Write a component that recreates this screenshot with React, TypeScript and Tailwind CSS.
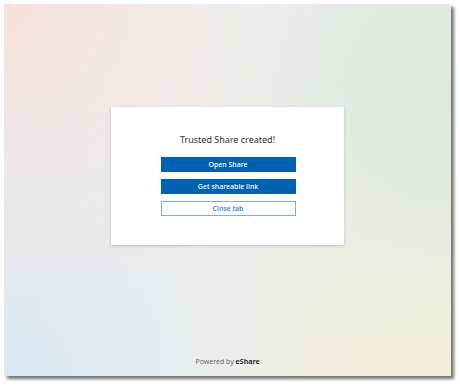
import React from 'react';

const buttonBase =
  'h-[15px] w-[135px] flex items-center justify-center text-[7px] font-medium leading-none';

export default function App() {
  return (
    <div className="w-[460px] h-[386px] bg-white pt-[4px] pl-[4px] font-['Noto_Sans',sans-serif]">
      <div
        className="w-[447px] h-[372px] flex flex-col shadow-[3px_3px_3px_rgba(0,0,0,0.55)]"
        style={{
          background:
            'radial-gradient(circle at 0% 0%, #f5e2df 0%, rgba(245,226,223,0) 55%),' +
            'radial-gradient(circle at 100% 25%, #dceadd 0%, rgba(220,234,221,0) 55%),' +
            'radial-gradient(circle at 0% 100%, #dbe9f4 0%, rgba(219,233,244,0) 55%),' +
            'radial-gradient(circle at 100% 100%, #f7efd8 0%, rgba(247,239,216,0) 55%),' +
            '#eeeeec',
        }}
      >
        {/* main area */}
        <div className="flex-1 flex items-center justify-center">
          <div className="w-[233px] h-[138px] bg-white shadow-[0_1px_3px_rgba(0,0,0,0.18)] flex flex-col items-center pt-[27px]">
            <h1 className="text-[9px] leading-[11px] text-[#323130]">
              Trusted Share created!
            </h1>
            <div className="mt-[12px] flex flex-col gap-[7px] pl-[1px]">
              <button className={`${buttonBase} bg-[#0063b1] text-white`}>Open Share</button>
              <button className={`${buttonBase} bg-[#0063b1] text-white`}>Get shareable link</button>
              <button className={`${buttonBase} bg-white border border-[#78aee6] text-[#2b78c5]`}>
                Close tab
              </button>
            </div>
          </div>
        </div>

        {/* footer */}
        <div className="h-[28px] flex items-center justify-center text-[7px] text-[#6b6b6b]">
          Powered by&nbsp;<span className="font-bold text-[#323130]">eShare</span>
        </div>
      </div>
    </div>
  );
}
